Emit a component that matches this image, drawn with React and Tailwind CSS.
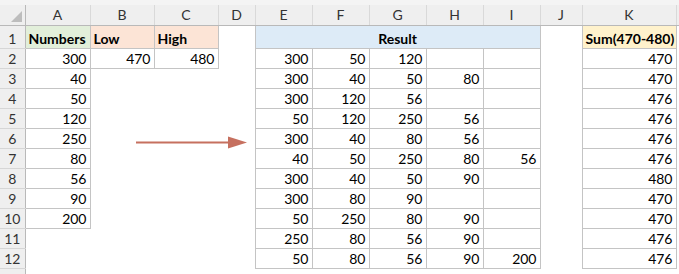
import React from 'react';

// column letters and widths of the sheet (first entry is the row-number gutter)
const COLS = ['', 'A', 'B', 'C', 'D', 'E', 'F', 'G', 'H', 'I', 'J', 'K', ''];
const WIDTHS = [25, 65, 64, 64, 37, 57, 57, 57, 57, 57, 42, 94, 3];

const numbers = [300, 40, 50, 120, 250, 80, 56, 90, 200];

const result = [
    [300, 50, 120, '', ''],
    [300, 40, 50, 80, ''],
    [300, 120, 56, '', ''],
    [50, 120, 250, 56, ''],
    [300, 40, 80, 56, ''],
    [40, 50, 250, 80, 56],
    [300, 40, 50, 90, ''],
    [300, 80, 90, '', ''],
    [50, 250, 80, 90, ''],
    [250, 80, 56, 90, ''],
    [50, 80, 56, 90, 200],
];

const sums = [470, 470, 476, 476, 476, 476, 480, 470, 470, 476, 476];

const cellBox = 'border border-[#c4c4c4] px-[3px] align-bottom leading-[18px] whitespace-nowrap overflow-hidden';
const numCell = `${cellBox} text-right`;
const headCell = `${cellBox} font-bold`;
const blank = 'p-0';

const RowHead = ({ n }) => (
    <td className="bg-[#efefef] border-r border-r-[#b9b9b9] border-b border-b-[#d6d6d6] text-center align-bottom leading-[18px] text-[#333] p-0">
        {n}
    </td>
);

const App = () => {
    const rows = [];

    // row 1: headings
    rows.push(
        <tr key={1} className="h-[23px]">
            <RowHead n={1} />
            <td className={`${headCell} text-left bg-[#e2efda]`}>Numbers</td>
            <td className={`${headCell} text-left bg-[#fce4d6]`}>Low</td>
            <td className={`${headCell} text-left bg-[#fce4d6]`}>High</td>
            <td className={blank}></td>
            <td colSpan={5} className={`${headCell} text-center bg-[#ddebf7]`}>Result</td>
            <td className={blank}></td>
            <td className={`${headCell} text-left bg-[#fff2cc]`}>Sum(470-480)</td>
            <td className={blank}></td>
        </tr>
    );

    for (let r = 2; r <= 12; r++) {
        const i = r - 2;
        rows.push(
            <tr key={r} className="h-[20px]">
                <RowHead n={r} />
                {i < numbers.length ? (
                    <td className={numCell}>{numbers[i]}</td>
                ) : (
                    <td className={blank}></td>
                )}
                {r === 2 ? (
                    <>
                        <td className={numCell}>470</td>
                        <td className={numCell}>480</td>
                    </>
                ) : (
                    <>
                        <td className={blank}></td>
                        <td className={blank}></td>
                    </>
                )}
                <td className={blank}></td>
                {result[i].map((v, j) => (
                    <td key={j} className={numCell}>{v}</td>
                ))}
                <td className={blank}></td>
                <td className={numCell}>{sums[i]}</td>
                <td className={blank}></td>
            </tr>
        );
    }

    // next row, only its top edge is in view
    rows.push(
        <tr key={13} className="h-[20px]">
            <RowHead n="" />
            {COLS.slice(1).map((_, j) => (
                <td key={j} className={blank}></td>
            ))}
        </tr>
    );

    return (
        <div className="relative w-[679px] h-[274px] overflow-hidden bg-white text-[14px] text-black" style={{ fontFamily: 'Lato, "Liberation Sans", sans-serif' }}>
            <div className="h-[5px] bg-[#f4f4f4]"></div>
            <table className="table-fixed border-collapse w-[679px]">
                <colgroup>
                    {WIDTHS.map((w, i) => (
                        <col key={i} style={{ width: w }} />
                    ))}
                </colgroup>
                <thead>
                    <tr className="h-[20px]">
                        {COLS.map((c, i) => (
                            <th
                                key={i}
                                className={`bg-[#efefef] font-normal text-[#333] text-center p-0 leading-[19px] border-b border-b-[#b9b9b9] ${
                                    i === 0 ? 'border-r border-r-[#b9b9b9]' : 'border-r border-r-[#d9d9d9]'
                                }`}
                            >
                                {i === 0 ? (
                                    <div className="flex justify-end items-end h-[19px] pr-[3px] pb-[2px]">
                                        <svg width="11" height="11" viewBox="0 0 11 11">
                                            <polygon points="11,0 11,11 0,11" fill="#bdbdbd" />
                                        </svg>
                                    </div>
                                ) : (
                                    c
                                )}
                            </th>
                        ))}
                    </tr>
                </thead>
                <tbody>{rows}</tbody>
            </table>

            {/* arrow from the source list to the result block */}
            <svg className="absolute left-[134px] top-[135px]" width="116" height="16" viewBox="0 0 116 16">
                <line x1="2" y1="7.5" x2="97" y2="7.5" stroke="#c6705f" strokeWidth="2.2" />
                <polygon points="94,1.5 113,7.5 94,13.5" fill="#c6705f" />
            </svg>
        </div>
    );
};

export default App;
